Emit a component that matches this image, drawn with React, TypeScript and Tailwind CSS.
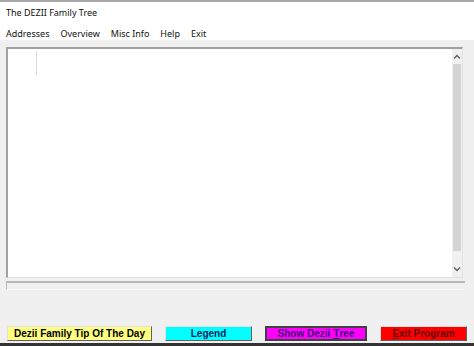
import React from "react";

export default function App() {
  const seg = { fontFamily: '"Noto Sans", "Open Sans", sans-serif' };
  const btn = { fontFamily: '"Liberation Sans", Arial, sans-serif' };
  return (
    <div className="w-[474px] h-[346px] bg-[#f0f0f0] flex flex-col overflow-hidden">
      <div className="h-[2px] bg-[#a8a8a8]" />
      <div className="bg-white h-[38px] flex flex-col text-[9px] text-[#111]" style={seg}>
        <div className="h-[20px] pl-[6px] pt-[5px] leading-[12px]">The DEZII Family Tree</div>
        <div className="flex gap-[11px] pl-[6px] pt-[6px] leading-[12px]">
          <span>Addresses</span>
          <span>Overview</span>
          <span>Misc Info</span>
          <span>Help</span>
          <span>Exit</span>
        </div>
      </div>
      <div className="h-[7px]" />
      <div className="mx-[6px] w-[457px] h-[231px] bg-white border-t-2 border-l-2 border-[#a0a0a0] border-r border-b border-r-[#e3e3e3] border-b-[#e3e3e3] flex">
        <div className="flex-1 relative">
          <div className="absolute left-[28px] top-[2px] w-px h-[24px] bg-[#d8d8d8]" />
        </div>
        <div className="w-[10px] bg-[#f0f0f0] flex flex-col items-center">
          <svg width="8" height="8" viewBox="0 0 8 8" className="mt-[4px]">
            <path d="M1 5.5 L4 2.5 L7 5.5" fill="none" stroke="#606060" strokeWidth="1.4" />
          </svg>
          <div className="w-[8px] flex-1 bg-[#d4d4d4] mt-[3px] mb-[14px]" />
          <svg width="8" height="8" viewBox="0 0 8 8" className="mb-[4px]">
            <path d="M1 2.5 L4 5.5 L7 2.5" fill="none" stroke="#606060" strokeWidth="1.4" />
          </svg>
        </div>
      </div>
      <div className="mx-[6px] mt-[3px] w-[459px] h-[9px] border-t-2 border-l border-[#b8b8b8] bg-[#f0f0f0] border-b border-b-[#fafafa]" />
      <div className="flex-1" />
      <div className="flex items-center px-[7px] text-[10px] font-bold leading-none" style={btn}>
        <div className="w-[145px] h-[15px] bg-[#ffff80] border border-[#e0e0e0] border-r-[#606060] border-b-[#606060] flex items-center justify-center text-black">
          Dezii Family Tip Of The Day
        </div>
        <div className="w-[87px] h-[15px] ml-[13px] bg-[#00ffff] border border-[#e0e0e0] border-r-[#606060] border-b-[#606060] flex items-center justify-center text-[#002060]">
          Legend
        </div>
        <div className="w-[102px] h-[15px] ml-[13px] bg-[#ff00ff] border-2 border-[#404040] flex items-center justify-center text-[#400070]">
          Show Dezii <span className="underline ml-[3px]">T</span>ree
        </div>
        <div className="w-[87px] h-[15px] ml-[13px] bg-[#ff0000] border border-[#e0e0e0] border-r-[#606060] border-b-[#606060] flex items-center justify-center text-[#600000]">
          <span className="underline">E</span>xit Program
        </div>
      </div>
      <div className="h-[2px]" />
      <div className="h-[3px] bg-[#333]" />
    </div>
  );
}
